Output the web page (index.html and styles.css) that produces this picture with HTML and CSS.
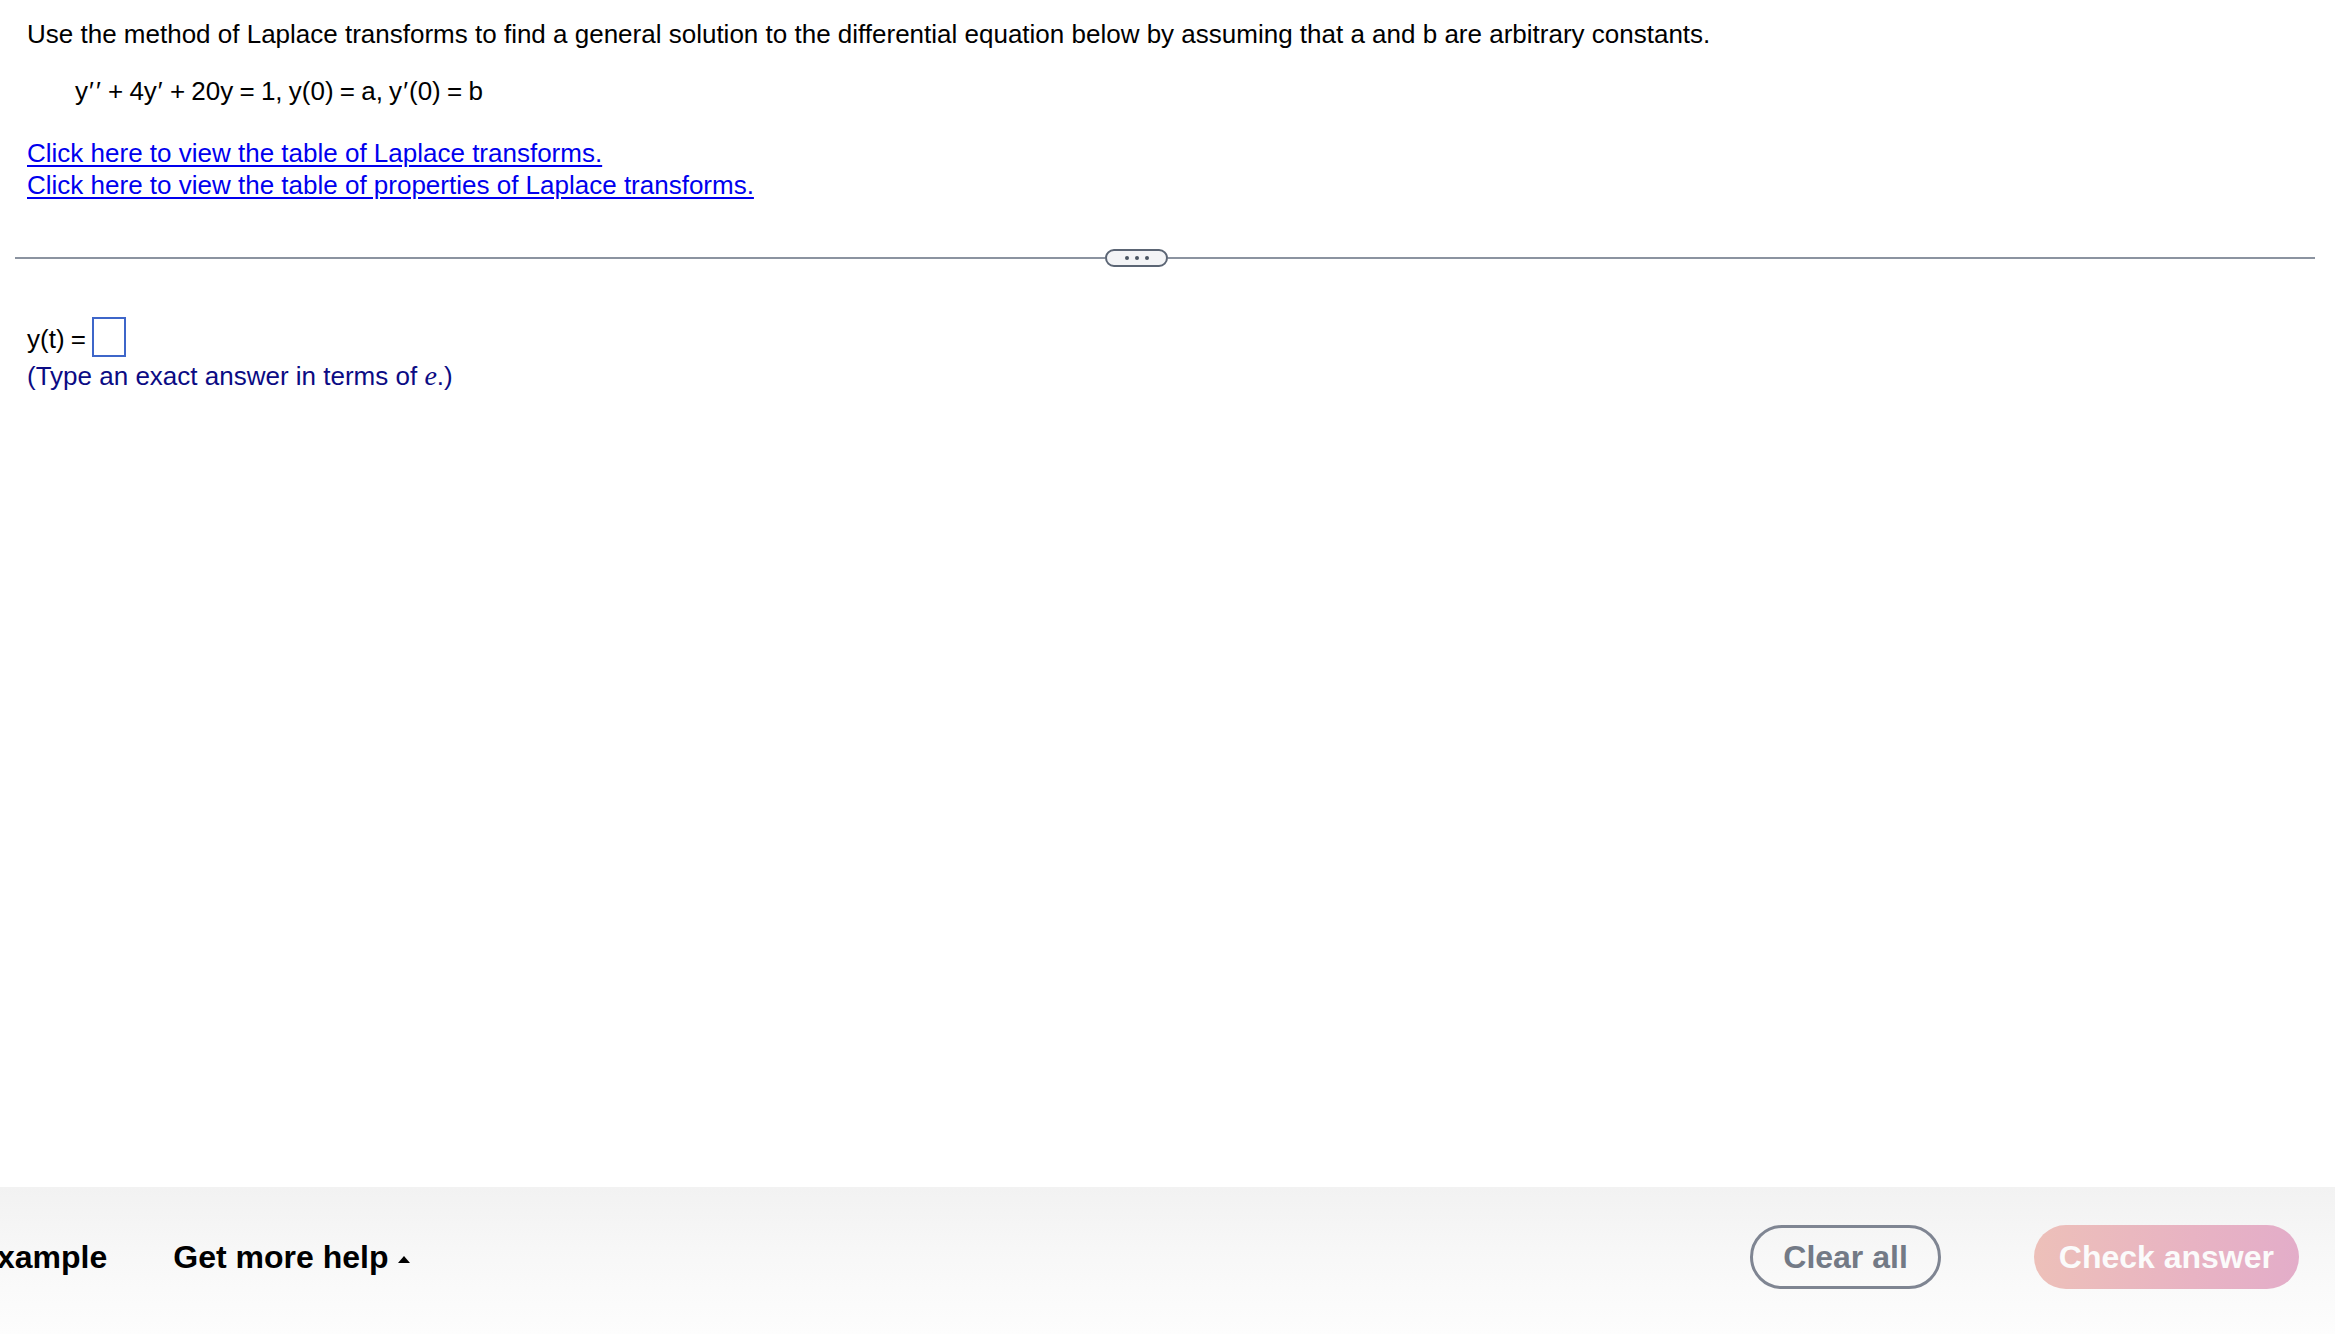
FILE: index.html
```html
<!DOCTYPE html>
<html lang="en">
<head>
<meta charset="utf-8">
<title>Laplace transforms</title>
<link rel="stylesheet" href="styles.css">
</head>
<body>
<div class="page">
  <main class="content">
    <p class="question">Use the method of Laplace transforms to find a general solution to the differential equation below by assuming that a and b are arbitrary constants.</p>
    <p class="equation">y<span class="pr">&#8242;</span><span class="pr">&#8242;</span> + 4y<span class="pr">&#8242;</span> + 20y = 1, y(0) = a, y<span class="pr">&#8242;</span>(0) = b</p>
    <div class="links">
      <a href="#" class="link">Click here to view the table of Laplace transforms.</a>
      <a href="#" class="link">Click here to view the table of properties of Laplace transforms.</a>
    </div>
    <div class="divider">
      <span class="rule rule-left"></span>
      <span class="pill"><i class="dot"></i><i class="dot"></i><i class="dot"></i></span>
      <span class="rule rule-right"></span>
    </div>
    <div class="answer">
      <p class="answer-line">y(t) = <span class="answer-box"></span></p>
      <p class="hint">(Type an exact answer in terms of <span class="math-e">e</span>.)</p>
    </div>
  </main>
  <footer class="footer">
    <div class="footer-left">
      <span class="foot-link">xample</span>
      <span class="foot-link help">Get more help <span class="caret"></span></span>
    </div>
    <div class="footer-right">
      <button class="btn btn-clear">Clear all</button>
      <button class="btn btn-check">Check answer</button>
    </div>
  </footer>
</div>
</body>
</html>
```

FILE: styles.css
```css
* { box-sizing: border-box; }
html, body { margin: 0; padding: 0; background: #ffffff; }
body {
  font-family: "Liberation Sans", Arial, Helvetica, sans-serif;
  color: #000;
  overflow: hidden;
}
.page {
  display: flex;
  flex-direction: column;
  height: 100vh;
}
.content {
  flex: 1;
  padding: 18px 0 0 0;
}
.question, .equation, .links, .answer {
  padding-left: 27px;
}
.question {
  margin: 0;
  font-size: 26px;
  line-height: 32px;
}
.equation {
  margin: 25px 0 0 0;
  padding-left: 75px;
  font-size: 26px;
  line-height: 32px;
  word-spacing: -1px;
}
.pr {
  margin-left: 1px;
  margin-right: 1px;
}
.links {
  margin-top: 30px;
  display: flex;
  flex-direction: column;
  align-items: flex-start;
}
.link {
  font-size: 26px;
  line-height: 32px;
  color: #0000ee;
  text-decoration: underline;
  text-underline-offset: 3px;
}
.divider {
  margin: 48px 20px 0 15px;
  height: 18px;
  display: flex;
  align-items: center;
}
.rule {
  height: 2px;
  background: #8b93a0;
}
.rule-left { width: 1090px; }
.rule-right { flex: 1; }
.pill {
  width: 63px;
  height: 18px;
  border: 2px solid #5b6574;
  border-radius: 9px;
  background: #f3f4f6;
  display: flex;
  align-items: center;
  justify-content: center;
  gap: 6px;
}
.dot {
  width: 4px;
  height: 4px;
  border-radius: 50%;
  background: #4b5563;
}
.answer {
  margin-top: 50px;
}
.answer-line {
  margin: 0;
  font-size: 26px;
  line-height: 32px;
  word-spacing: -1px;
}
.answer-box {
  display: inline-block;
  width: 34px;
  height: 40px;
  border: 2px solid #3e66c9;
  vertical-align: -9px;
  margin-left: 0;
}
.hint {
  margin: 3px 0 0 0;
  font-size: 26px;
  line-height: 32px;
  color: #0b0b84;
}
.math-e {
  font-family: "Liberation Serif", "Times New Roman", serif;
  font-style: italic;
  font-size: 28px;
}
.footer {
  height: 147px;
  flex: none;
  background: linear-gradient(to bottom, #f2f2f2 0%, #f8f8f8 50%, #fdfdfd 100%);
  display: flex;
  align-items: center;
  justify-content: space-between;
  padding: 0 36px 8px 0;
}
.footer-left {
  display: flex;
  align-items: center;
  gap: 66px;
}
.foot-link {
  font-size: 32px;
  font-weight: bold;
  color: #000;
  line-height: 40px;
  display: flex;
  align-items: center;
}
.foot-link:first-child {
  margin-left: -3px;
}
.caret {
  display: inline-block;
  width: 0;
  height: 0;
  border-left: 6px solid transparent;
  border-right: 6px solid transparent;
  border-bottom: 7px solid #000;
  margin-left: 10px;
  margin-top: 6px;
}
.footer-right {
  display: flex;
  align-items: center;
  gap: 93px;
}
.btn {
  font-family: "Liberation Sans", Arial, Helvetica, sans-serif;
  font-size: 32px;
  font-weight: bold;
  height: 64px;
  border-radius: 32px;
  cursor: pointer;
  line-height: 1;
}
.btn-clear {
  background: transparent;
  border: 3px solid #7f8592;
  color: #737a86;
  padding: 0 30px;
}
.btn-check {
  border: none;
  color: #fbfbfb;
  padding: 0 25px;
  background: linear-gradient(to right, #edc0b9 0%, #e8b3c3 60%, #e3adc9 100%);
}
```
